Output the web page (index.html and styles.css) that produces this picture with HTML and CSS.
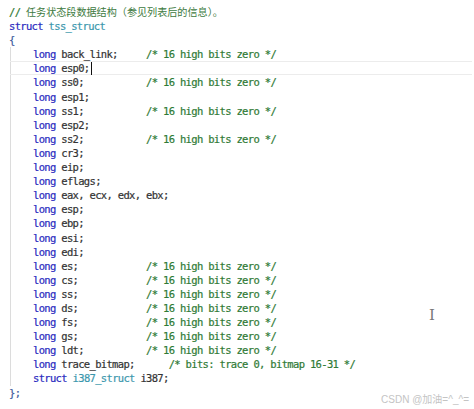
FILE: index.html
```
<!DOCTYPE html>
<html>
<head>
<meta charset="utf-8">
<link rel="stylesheet" href="styles.css">
</head>
<body>
<div class="editor">
<div class="ln"><span class="c">// <span class="cjk">任务状态段数据结构（参见列表后的信息）。</span></span></div>
<div class="ln"><span class="k">struct</span> <span class="t">tss_struct</span></div>
<div class="ln"><span class="b">{</span></div>
<div class="body">
<div class="ln"><span class="k">long</span> back_link;     <span class="c">/* 16 high bits zero */</span></div>
<div class="ln cur"><span class="k">long</span> esp0;<span class="caret"></span></div>
<div class="ln"><span class="k">long</span> ss0;           <span class="c">/* 16 high bits zero */</span></div>
<div class="ln"><span class="k">long</span> esp1;</div>
<div class="ln"><span class="k">long</span> ss1;           <span class="c">/* 16 high bits zero */</span></div>
<div class="ln"><span class="k">long</span> esp2;</div>
<div class="ln"><span class="k">long</span> ss2;           <span class="c">/* 16 high bits zero */</span></div>
<div class="ln"><span class="k">long</span> cr3;</div>
<div class="ln"><span class="k">long</span> eip;</div>
<div class="ln"><span class="k">long</span> eflags;</div>
<div class="ln"><span class="k">long</span> eax, ecx, edx, ebx;</div>
<div class="ln"><span class="k">long</span> esp;</div>
<div class="ln"><span class="k">long</span> ebp;</div>
<div class="ln"><span class="k">long</span> esi;</div>
<div class="ln"><span class="k">long</span> edi;</div>
<div class="ln"><span class="k">long</span> es;            <span class="c">/* 16 high bits zero */</span></div>
<div class="ln"><span class="k">long</span> cs;            <span class="c">/* 16 high bits zero */</span></div>
<div class="ln"><span class="k">long</span> ss;            <span class="c">/* 16 high bits zero */</span></div>
<div class="ln"><span class="k">long</span> ds;            <span class="c">/* 16 high bits zero */</span></div>
<div class="ln"><span class="k">long</span> fs;            <span class="c">/* 16 high bits zero */</span></div>
<div class="ln"><span class="k">long</span> gs;            <span class="c">/* 16 high bits zero */</span></div>
<div class="ln"><span class="k">long</span> ldt;           <span class="c">/* 16 high bits zero */</span></div>
<div class="ln"><span class="k">long</span> trace_bitmap;      <span class="c">/* bits: trace 0, bitmap 16-31 */</span></div>
<div class="ln"><span class="k">struct</span> <span class="t">i387_struct</span> i387;</div>
</div>
<div class="ln"><span class="b">};</span></div>
</div>
<div class="ibeam">I</div>
<div class="mark">CSDN @加油=^_^=</div>
</body>
</html>
```
FILE: styles.css
```
html, body {
  margin: 0;
  padding: 0;
  background: #ffffff;
  width: 474px;
  height: 409px;
  overflow: hidden;
}
body {
  position: relative;
}
.editor {
  padding: 5px 2px 0 9px;
  font-family: "DejaVu Sans Mono", "Noto Sans CJK SC", monospace;
  font-size: 10.5px;
  letter-spacing: -0.67px;
  color: #333333;
  -webkit-text-stroke: 0.2px;
}
.ln {
  height: 14.1px;
  line-height: 14.1px;
  white-space: pre;
}
.body {
  margin-left: 1px;
  border-left: 1px solid #dcdcdc;
  padding-left: 22px;
}
.cur {
  margin-left: -23px;
  padding-left: 23px;
  box-shadow: inset 0 1px 0 #ececec, inset 0 -1px 0 #ececec;
}
.k { color: #2a2ac0; }
.t { color: #3b97ad; }
.c { color: #2f7a35; }
.b { color: #3d5a9c; }
.cjk {
  font-family: "Noto Sans CJK SC", sans-serif;
  font-size: 10.1px;
  letter-spacing: 0;
  -webkit-text-stroke: 0;
  color: #3d7a40;
}
.caret {
  display: inline-block;
  width: 0;
  height: 13px;
  border-left: 1px solid #111;
  vertical-align: -3px;
  margin-left: 1px;
}
.ibeam {
  position: absolute;
  left: 429px;
  top: 306px;
  font-family: "DejaVu Serif", serif;
  font-size: 15px;
  color: #777;
}
.mark {
  position: absolute;
  right: 5px;
  top: 391px;
  font-family: "Liberation Sans", "Noto Sans CJK SC", sans-serif;
  font-size: 10px;
  color: #c4c4c4;
}
```
